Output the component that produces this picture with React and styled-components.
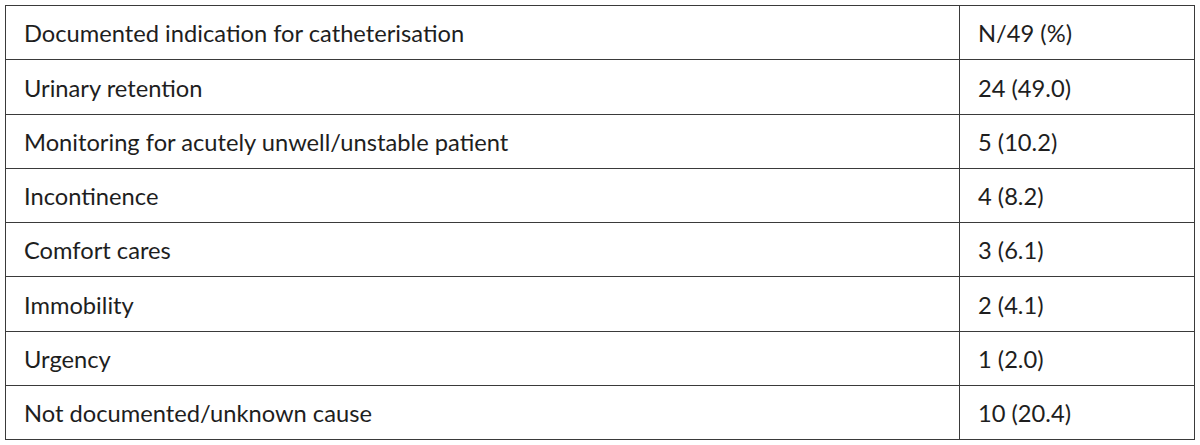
import React from "react";
import styled, { createGlobalStyle } from "styled-components";

const GlobalStyle = createGlobalStyle`
  html, body {
    margin: 0;
    padding: 0;
    background: #ffffff;
  }
  body {
    font-family: "Lato", "Noto Sans", sans-serif;
    color: #1e1e1e;
  }
`;

const Page = styled.div`
  padding: 5px 5px 0 5px;
`;

const Table = styled.table`
  width: 1190px;
  border-collapse: collapse;
  border: 1px solid #3a3a3a;
  border-top-color: #7a7a7a;
  table-layout: fixed;
`;

const Row = styled.tr`
  height: 54.3px;
`;

const Cell = styled.td`
  box-sizing: border-box;
  border: 1px solid #3a3a3a;
  padding: 3px 18px 0 18px;
  font-size: 23.7px;
  line-height: 1;
  vertical-align: middle;
  text-align: left;
  width: ${(p) => p.$width || "auto"};
`;

const rows = [
  ["Documented indication for catheterisation", "N/49 (%)"],
  ["Urinary retention", "24 (49.0)"],
  ["Monitoring for acutely unwell/unstable patient", "5 (10.2)"],
  ["Incontinence", "4 (8.2)"],
  ["Comfort cares", "3 (6.1)"],
  ["Immobility", "2 (4.1)"],
  ["Urgency", "1 (2.0)"],
  ["Not documented/unknown cause", "10 (20.4)"],
];

export default function App() {
  return (
    <>
      <GlobalStyle />
      <Page>
        <Table>
          <tbody>
            {rows.map(([label, value]) => (
              <Row key={label}>
                <Cell $width="954px">{label}</Cell>
                <Cell>{value}</Cell>
              </Row>
            ))}
          </tbody>
        </Table>
      </Page>
    </>
  );
}
